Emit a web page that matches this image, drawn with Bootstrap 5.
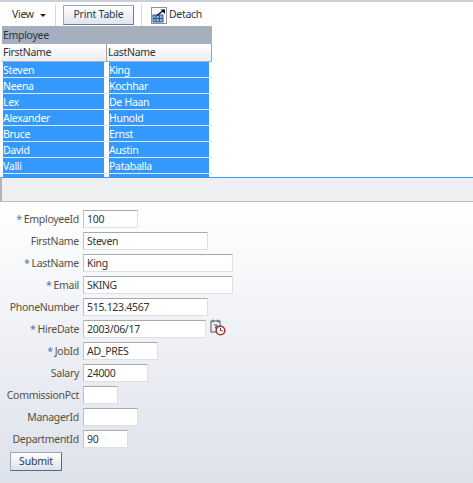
<!DOCTYPE html>
<html><head><meta charset="utf-8">
<link href="https://cdn.jsdelivr.net/npm/bootstrap@5.3.0/dist/css/bootstrap.min.css" rel="stylesheet">
<style>
html,body{height:483px;overflow:hidden}
body{font-family:"Noto Sans","DejaVu Sans",sans-serif;font-size:10.5px;letter-spacing:-.3px;color:#3c3c3c;background:#fff}
.topedge{height:2px;background:#c9ced9}
.tbar{height:24px;padding-top:2px;background:#fff}
.tview{width:56px;padding-left:12px;border-right:1px solid #d5d8de;height:22px;color:#333}
.caret-d{width:0;height:0;border:3px solid transparent;border-top:3px solid #222;border-bottom:0;margin-left:6px}
.tprint{width:71px;height:20px;margin-left:7px;border:1px solid #9aa5b5;border-right-color:#6f7b8c;border-bottom-color:#6f7b8c;border-radius:1px;background:linear-gradient(#fff,#dfe5ee);color:#2b3a4e;font-size:10.5px;letter-spacing:-.2px;padding:0 0 1px}
.tsep{width:1px;height:22px;background:#d5d8de;margin-left:7px}
.tdetach{margin-left:9px;color:#2b3a4e}
.tdetach svg{margin-right:2px}
.gridwrap{height:151px;overflow:hidden;padding-left:2px}
table.dgrid{width:210px;table-layout:fixed;border-collapse:separate;border-spacing:0}
.dgrid th{font-weight:400;padding:1px 0 0 1px;color:#333}
.dgrid .band{height:18px;background:#a6afbe;color:#2c3440}
.dgrid .cols th{height:17px;background:linear-gradient(#fff,#ebedf1);border-bottom:1px solid #a6afbe;border-right:1px solid #9aa3b2}
.dgrid td{padding:0;height:16px;background:#fff;border-bottom:1px solid #e3e7ee}
.dgrid td span{display:block;height:15px;line-height:16px;background:#3399ff;color:#fff;margin:0 3px 0 1px;overflow:hidden}
.dgrid td:last-child span{margin:0 3px 0 2px}
.splitter{height:25px;background:#eeeff3;border-top:1px solid #3a9be8;border-bottom:1px solid #bcbcbc;border-left:2px solid #b5b5b5}
.formwrap{height:281px;background:linear-gradient(#fff,#dde1ea);padding-top:8px}
.frow{height:18px;margin-bottom:4px}
.flabel{width:79px;padding-top:1px;text-align:right;color:#55513f;white-space:nowrap;letter-spacing:-.3px}
.flabel i{font-style:normal;color:#4a78b0;margin-right:2px}
.finput{margin-left:4px;height:18px;padding:0 0 0 3px;border:1px solid #dcdfe4;border-top-color:#a9a9a9;border-left-color:#c0c0c0;background:#fff;color:#333;font:inherit;letter-spacing:inherit;border-radius:0;box-sizing:border-box}
.w35{width:35px}.w45{width:45px}.w55{width:55px}.w65{width:65px}.w75{width:75px}.w123{width:123px}.w125{width:125px}.w150{width:150px}
.dateicon{margin-left:4px;margin-top:-3px}
.fsubmit{width:52px;height:19px;margin:0 0 0 10px;padding:0;border:1px solid #9aa5b5;border-right-color:#5d6878;border-bottom-color:#5d6878;border-radius:1px;background:linear-gradient(#fff,#dbe2ee);color:#2b3a4e;font-size:10.5px;letter-spacing:-.2px}
</style></head><body>
<div class="topedge"></div>
<div class="tbar d-flex align-items-center">
  <div class="tview d-flex align-items-center">View<span class="caret-d"></span></div>
  <button class="tprint" type="button">Print Table</button>
  <div class="tsep"></div>
  <div class="tdetach d-flex align-items-center">
    <svg width="16" height="17" viewBox="0 0 16 17"><rect x=".5" y=".5" width="15" height="16" fill="#fff" stroke="#222" stroke-dasharray="1 1"/><rect x="2" y="8" width="10" height="7" fill="#8fb0dc" stroke="#2d5590"/><path d="M5 8v7M8.500 8v7M2 11.500h10" stroke="#2d5590"/><path d="M6 8.500 13 3" stroke="#111" stroke-width="1.500"/><path d="M9.500 2.500H14V7z" fill="#111"/></svg>
    Detach
  </div>
</div>
<div class="gridwrap">
<table class="dgrid">
<colgroup><col style="width:105px"><col></colgroup>
<thead>
<tr><th class="band" colspan="2">Employee</th></tr>
<tr class="cols"><th>FirstName</th><th>LastName</th></tr>
</thead>
<tbody>
<tr><td><span>Steven</span></td><td><span>King</span></td></tr>
<tr><td><span>Neena</span></td><td><span>Kochhar</span></td></tr>
<tr><td><span>Lex</span></td><td><span>De Haan</span></td></tr>
<tr><td><span>Alexander</span></td><td><span>Hunold</span></td></tr>
<tr><td><span>Bruce</span></td><td><span>Ernst</span></td></tr>
<tr><td><span>David</span></td><td><span>Austin</span></td></tr>
<tr><td><span>Valli</span></td><td><span>Pataballa</span></td></tr>
<tr><td><span>&nbsp;</span></td><td><span>&nbsp;</span></td></tr>
</tbody>
</table>
</div>
<div class="splitter"></div>
<form class="formwrap">
  <div class="frow d-flex align-items-center"><label class="flabel"><i>*</i>EmployeeId</label><input class="finput w55" value="100"></div>
  <div class="frow d-flex align-items-center"><label class="flabel">FirstName</label><input class="finput w125" value="Steven"></div>
  <div class="frow d-flex align-items-center"><label class="flabel"><i>*</i>LastName</label><input class="finput w150" value="King"></div>
  <div class="frow d-flex align-items-center"><label class="flabel"><i>*</i>Email</label><input class="finput w150" value="SKING"></div>
  <div class="frow d-flex align-items-center"><label class="flabel">PhoneNumber</label><input class="finput w125" value="515.123.4567"></div>
  <div class="frow d-flex align-items-center"><label class="flabel"><i>*</i>HireDate</label><input class="finput w123" value="2003/06/17">
    <svg class="dateicon" width="16" height="17" viewBox="0 0 16 17"><rect x="1" y="2" width="9" height="11" fill="#eef1f6" stroke="#47566e"/><path d="M3 .5v3M8 .5v3" stroke="#47566e"/><path d="M4 6h3v2H5.500v1.500" fill="none" stroke="#3a4a62"/><circle cx="10.500" cy="11.500" r="4.300" fill="#fff" stroke="#a5342a" stroke-width="1.600"/><path d="M10.500 9v2.700h2.200" fill="none" stroke="#444"/></svg></div>
  <div class="frow d-flex align-items-center"><label class="flabel"><i>*</i>JobId</label><input class="finput w75" value="AD_PRES"></div>
  <div class="frow d-flex align-items-center"><label class="flabel">Salary</label><input class="finput w65" value="24000"></div>
  <div class="frow d-flex align-items-center"><label class="flabel">CommissionPct</label><input class="finput w35" value=""></div>
  <div class="frow d-flex align-items-center"><label class="flabel">ManagerId</label><input class="finput w55" value=""></div>
  <div class="frow d-flex align-items-center"><label class="flabel">DepartmentId</label><input class="finput w45" value="90"></div>
  <button class="fsubmit" type="button">Submit</button>
</form>
</body></html>
